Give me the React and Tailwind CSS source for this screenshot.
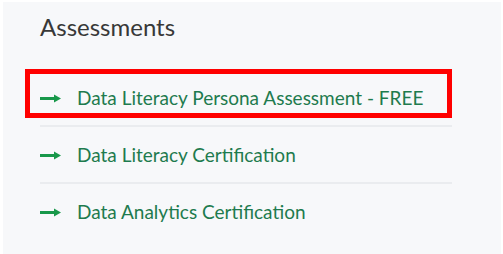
const items = [
  'Data Literacy Persona Assessment - FREE',
  'Data Literacy Certification',
  'Data Analytics Certification',
]

function Arrow() {
  return (
    <svg width="21" height="9" viewBox="0 0 21 9" className="shrink-0">
      <line x1="0" y1="4.5" x2="15" y2="4.5" stroke="#18984a" strokeWidth="3" />
      <polygon points="14,0.5 21,4.5 14,8.5" fill="#18984a" />
    </svg>
  )
}

export default function App() {
  return (
    <div className="bg-white w-[503px] h-[254px] overflow-hidden pt-[2px] pl-[3px]" style={{ fontFamily: 'Lato, "Noto Sans", sans-serif' }}>
      <div className="bg-[#f7f8fa] w-[498px] h-[252px] pl-[37px] pt-[10px]">
        <h2 className="text-[24px] leading-[30px] text-[#383838]">Assessments</h2>
        <ul className="mt-[28px] w-[412px]">
          {items.map((t, i) => (
            <li key={t} className="relative border-b-2 border-[#eaecef] last:border-b-0">
              {i === 0 && (
                <span className="absolute left-[-15px] right-0 top-[-1px] h-[49px] border-[5px] border-[#ff0000] pointer-events-none" />
              )}
              <a className="flex items-center h-[55px] pt-[1px] text-[19px] text-[#1e7b4e]">
                <Arrow />
                <span className="ml-[16px]">{t}</span>
              </a>
            </li>
          ))}
        </ul>
      </div>
    </div>
  )
}
